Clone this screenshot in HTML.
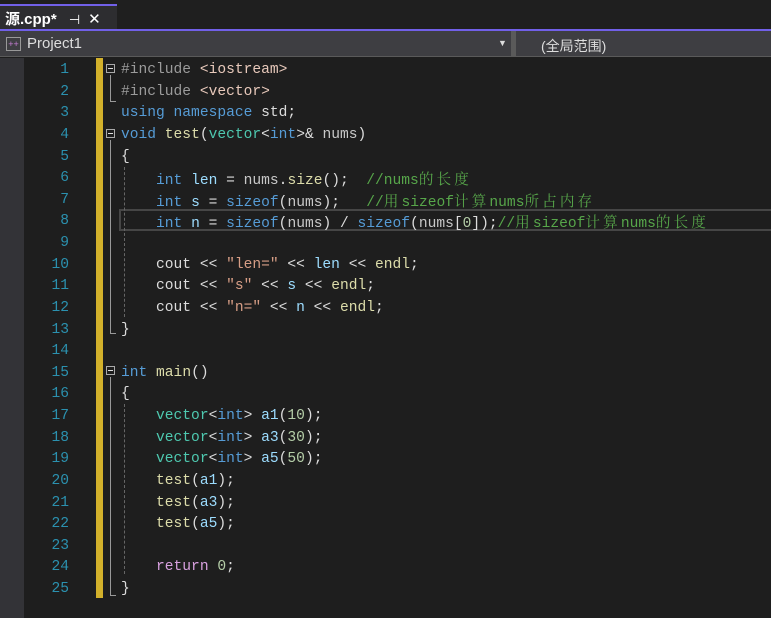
<!DOCTYPE html>
<html><head><meta charset="utf-8"><style>
*{margin:0;padding:0;box-sizing:border-box}
body{width:771px;height:618px;background:#1e1e1e;overflow:hidden;position:relative;font-family:"Liberation Sans","Noto Sans CJK SC",sans-serif}
.tabbar{position:absolute;left:0;top:0;width:771px;height:29px;background:#1f1f1f}
.tab{position:absolute;left:0;top:4px;width:117px;height:25px;background:#2d2d30;border-top:2px solid #7160e8;color:#fff;font-weight:bold;font-size:15px;padding:2px 0 0 5px}
.pl{position:absolute;left:0;top:29px;width:771px;height:2px;background:#7160e8}
.nav{position:absolute;left:0;top:31px;width:771px;height:26px;background:#3e3e42;border-bottom:1px solid #5a5a5a}
.nav .sep{position:absolute;left:511px;top:0;width:5px;height:26px;background:#5a5a5a}
.nav .t1{position:absolute;left:27px;top:4px;color:#ddd;font-size:15px}
.nav .t2{position:absolute;left:541px;top:5px;color:#ddd;font-size:14px}
.gut{position:absolute;left:0;top:58px;width:24px;height:560px;background:#333337}
.ybar{position:absolute;left:96px;top:58px;width:7px;height:540px;background:#d3b12b}
.code{position:absolute;left:0;top:60px;font-family:"Liberation Mono","Noto Serif CJK SC",monospace;font-size:14.6px}
.row{height:21.625px;line-height:21.625px;position:relative;white-space:pre;color:#dcdcdc}
.ln{position:absolute;left:24px;width:45px;text-align:right;color:#2b91af}
.tx{position:absolute;left:121px}
.k{color:#569cd6}.t{color:#4ec9b0}.f{color:#dcdcaa}.s{color:#d69d85}.c{color:#57a64a}.v{color:#9cdcfe}.g{color:#c8c8c8}.n{color:#b5cea8}.p{color:#9b9b9b}.i{color:#e8c9bb}.r{color:#d8a0df}.b{color:#dcdcdc}
.cj{font-family:"Noto Serif CJK SC",serif;letter-spacing:3.1px}
.box{position:absolute;left:106px;width:9px;height:9px;border:1px solid #aaa}
.box::after{content:"";position:absolute;left:1px;top:3px;width:5px;height:1px;background:#ddd}
.vl{position:absolute;left:110px;width:1px;background:#999}
.dg{position:absolute;left:124px;width:0;border-left:1px dashed #666}
.hl{position:absolute;left:119px;top:209px;width:660px;height:22px;border:2px solid #464646}
</style></head><body>
<div class="tabbar"><div class="tab">源.cpp* <span style="font-weight:normal;font-size:13px;margin-left:8px">⊣</span><span style="font-weight:normal;margin-left:8px">✕</span></div></div>
<div class="pl"></div>
<div class="nav"><div style="position:absolute;left:6px;top:6px;width:15px;height:14px;border:1px solid #999;color:#c77ed6;font-size:9px;line-height:12px;text-align:center">++</div><span class="t1">Project1</span><span style="position:absolute;left:498px;top:7px;color:#ddd;font-size:9px">▼</span><div class="sep"></div><span class="t2">(全局范围)</span></div>
<div class="gut"></div>
<div class="ybar"></div>
<div class="hl"></div>
<div class="box" style="top:64px"></div><div class="vl" style="top:75px;height:27px"></div><div style="position:absolute;left:110px;top:101px;width:6px;height:1px;background:#999"></div>
<div class="box" style="top:129px"></div><div class="vl" style="top:140px;height:194px"></div><div style="position:absolute;left:110px;top:333px;width:6px;height:1px;background:#999"></div>
<div class="box" style="top:366px"></div><div class="vl" style="top:377px;height:219px"></div><div style="position:absolute;left:110px;top:595px;width:6px;height:1px;background:#999"></div>
<div class="dg" style="top:167px;height:150px"></div>
<div class="dg" style="top:404px;height:170px"></div>
<div class="code">
<div class="row"><span class="ln">1</span><span class="tx"><span class="p">#include</span> <span class="i">&lt;iostream&gt;</span></span></div>
<div class="row"><span class="ln">2</span><span class="tx"><span class="p">#include</span> <span class="i">&lt;vector&gt;</span></span></div>
<div class="row"><span class="ln">3</span><span class="tx"><span class="k">using namespace</span> std;</span></div>
<div class="row"><span class="ln">4</span><span class="tx"><span class="k">void</span> <span class="f">test</span>(<span class="t">vector</span>&lt;<span class="k">int</span>&gt;&amp; <span class="g">nums</span>)</span></div>
<div class="row"><span class="ln">5</span><span class="tx">{</span></div>
<div class="row"><span class="ln">6</span><span class="tx">    <span class="k">int</span> <span class="v">len</span> = <span class="g">nums</span>.<span class="f">size</span>();  <span class="c">//nums<span class="cj">的长度</span></span></span></div>
<div class="row"><span class="ln">7</span><span class="tx">    <span class="k">int</span> <span class="v">s</span> = <span class="k">sizeof</span>(<span class="g">nums</span>);   <span class="c">//<span class="cj">用</span>sizeof<span class="cj">计算</span>nums<span class="cj">所占内存</span></span></span></div>
<div class="row"><span class="ln">8</span><span class="tx">    <span class="k">int</span> <span class="v">n</span> = <span class="k">sizeof</span>(<span class="g">nums</span>) / <span class="k">sizeof</span>(<span class="g">nums</span>[<span class="n">0</span>]);<span class="c">//<span class="cj">用</span>sizeof<span class="cj">计算</span>nums<span class="cj">的长度</span></span></span></div>
<div class="row"><span class="ln">9</span></div>
<div class="row"><span class="ln">10</span><span class="tx">    cout &lt;&lt; <span class="s">"len="</span> &lt;&lt; <span class="v">len</span> &lt;&lt; <span class="f">endl</span>;</span></div>
<div class="row"><span class="ln">11</span><span class="tx">    cout &lt;&lt; <span class="s">"s"</span> &lt;&lt; <span class="v">s</span> &lt;&lt; <span class="f">endl</span>;</span></div>
<div class="row"><span class="ln">12</span><span class="tx">    cout &lt;&lt; <span class="s">"n="</span> &lt;&lt; <span class="v">n</span> &lt;&lt; <span class="f">endl</span>;</span></div>
<div class="row"><span class="ln">13</span><span class="tx">}</span></div>
<div class="row"><span class="ln">14</span></div>
<div class="row"><span class="ln">15</span><span class="tx"><span class="k">int</span> <span class="f">main</span>()</span></div>
<div class="row"><span class="ln">16</span><span class="tx">{</span></div>
<div class="row"><span class="ln">17</span><span class="tx">    <span class="t">vector</span>&lt;<span class="k">int</span>&gt; <span class="v">a1</span>(<span class="n">10</span>);</span></div>
<div class="row"><span class="ln">18</span><span class="tx">    <span class="t">vector</span>&lt;<span class="k">int</span>&gt; <span class="v">a3</span>(<span class="n">30</span>);</span></div>
<div class="row"><span class="ln">19</span><span class="tx">    <span class="t">vector</span>&lt;<span class="k">int</span>&gt; <span class="v">a5</span>(<span class="n">50</span>);</span></div>
<div class="row"><span class="ln">20</span><span class="tx">    <span class="f">test</span>(<span class="v">a1</span>);</span></div>
<div class="row"><span class="ln">21</span><span class="tx">    <span class="f">test</span>(<span class="v">a3</span>);</span></div>
<div class="row"><span class="ln">22</span><span class="tx">    <span class="f">test</span>(<span class="v">a5</span>);</span></div>
<div class="row"><span class="ln">23</span></div>
<div class="row"><span class="ln">24</span><span class="tx">    <span class="r">return</span> <span class="n">0</span>;</span></div>
<div class="row"><span class="ln">25</span><span class="tx">}</span></div>
</div>
</body></html>
